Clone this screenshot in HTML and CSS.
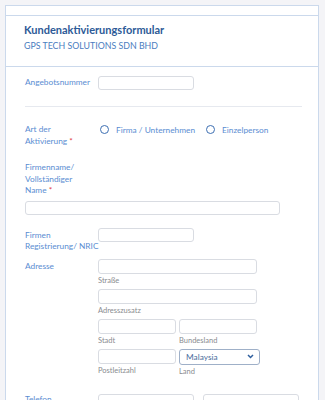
FILE: index.html
```html
<!DOCTYPE html>
<html lang="de">
  <head>
    <meta charset="UTF-8" />
    <meta name="viewport" content="width=device-width, initial-scale=1.0" />
    <title>Kundenaktivierungsformular</title>
    <link rel="stylesheet" href="styles.css">
  </head>
  <body>
    <div class="card">
      <div class="top-strip"></div>

      <div class="header">
        <h1 class="title">Kundenaktivierungsformular</h1>
        <p class="subtitle">GPS TECH SOLUTIONS SDN BHD</p>
      </div>

      <div class="form">
        <div class="row row-offer">
          <label class="label" for="offer">Angebotsnummer</label>
          <input class="input short" type="text" id="offer" />
        </div>

        <div class="divider"></div>

        <div class="row row-type">
          <span class="label">Art der Aktivierung <span class="req">*</span></span>
          <div class="radios">
            <label class="radio"><span class="circle"></span>Firma / Unternehmen</label>
            <label class="radio"><span class="circle"></span>Einzelperson</label>
          </div>
        </div>

        <div class="row-stack">
          <label class="label narrow" for="company">Firmenname/ Vollständiger Name <span class="req">*</span></label>
          <input class="input wide" type="text" id="company" />
        </div>

        <div class="row row-reg">
          <label class="label" for="reg">Firmen<br>Registrierung/ NRIC</label>
          <input class="input short" type="text" id="reg" />
        </div>

        <div class="row row-address">
          <span class="label">Adresse</span>
          <div class="address">
            <div class="field full">
              <input class="input" type="text" />
              <span class="sub">Straße</span>
            </div>
            <div class="field full">
              <input class="input" type="text" />
              <span class="sub">Adresszusatz</span>
            </div>
            <div class="field">
              <input class="input" type="text" />
              <span class="sub">Stadt</span>
            </div>
            <div class="field">
              <input class="input" type="text" />
              <span class="sub">Bundesland</span>
            </div>
            <div class="field">
              <input class="input" type="text" />
              <span class="sub">Postleitzahl</span>
            </div>
            <div class="field">
              <div class="select">
                <span>Malaysia</span>
                <svg width="7" height="5" viewBox="0 0 7 5"><path d="M1 1 L3.5 3.5 L6 1" fill="none" stroke="#2f5f9e" stroke-width="1.5"/></svg>
              </div>
              <span class="sub land">Land</span>
            </div>
          </div>
        </div>

        <div class="row row-phone">
          <span class="label">Telefon</span>
          <div class="phone">
            <input class="input short" type="text" />
            <input class="input short" type="text" />
          </div>
        </div>
      </div>
    </div>
  </body>
</html>
```

FILE: styles.css
```css
body {
  margin: 0;
  background-color: #f4f4f7;
  font-family: Lato, "Noto Sans", sans-serif;
  overflow: hidden;
}

.card {
  margin: 5px 6px 0 5px;
  background-color: #fff;
  border: 1px solid #cbd9ec;
  border-bottom: none;
  height: 420px;
}

.top-strip {
  height: 9px;
  border-bottom: 1px solid #cbd9ec;
}

.header {
  padding: 7px 18px 0;
  height: 43px;
  border-bottom: 1px solid #cbd9ec;
}

.title {
  margin: 0;
  font-size: 11px;
  line-height: 14px;
  font-weight: bold;
  color: #2d5a97;
}

.subtitle {
  margin: 3px 0 0;
  font-size: 8.8px;
  color: #4b7dc0;
}

.form {
  padding: 8px 18px 0 19px;
}

.row {
  display: grid;
  grid-template-columns: 73px 1fr;
}

.label {
  font-size: 8.3px;
  line-height: 11.5px;
  color: #5a8dd2;
}

.req {
  color: #e2454a;
}

.input {
  display: block;
  box-sizing: border-box;
  height: 14px;
  border: 1px solid #d9dce2;
  border-radius: 3px;
  background: #fff;
  padding: 0;
  margin: 0;
}

.short {
  width: 96px;
}

.row-offer {
  align-items: center;
  height: 15px;
}

.divider {
  margin: 16px 0 0 0;
  height: 1px;
  background-color: #e6e9ef;
  width: 277px;
}

.row-type {
  margin-top: 17px;
}

.row-type .label {
  padding-right: 14px;
}

.radios {
  display: flex;
  gap: 9px;
}

.radio {
  display: flex;
  align-items: center;
  font-size: 8.3px;
  color: #5a8dd2;
  height: 11px;
}

.circle {
  width: 7px;
  height: 7px;
  border: 1.6px solid #3d6fb2;
  border-radius: 50%;
  margin: 0 7px 0 2px;
}

.row-stack {
  margin-top: 15px;
}

.narrow {
  display: block;
  width: 60px;
}

.wide {
  width: 255px;
  margin-top: 4px;
  height: 14px;
}

.row-reg {
  margin-top: 13px;
}

.row-reg .label {
  white-space: nowrap;
  padding-top: 2px;
}

.row-address {
  margin-top: 6px;
}

.row-address .label {
  padding-top: 2px;
}

.address {
  display: grid;
  grid-template-columns: 78px 78px;
  column-gap: 3px;
  row-gap: 4px;
  width: 159px;
}

.field .input {
  width: 100%;
  height: 15px;
}

.full {
  grid-column: 1 / 3;
}

.sub {
  display: block;
  font-size: 7.5px;
  color: #8a8c90;
  margin-top: 2px;
  line-height: 9px;
}

.select {
  box-sizing: border-box;
  width: 81px;
  height: 16px;
  border: 1px solid #9fb0c8;
  border-radius: 3px;
  display: flex;
  align-items: center;
  justify-content: space-between;
  padding: 0 5px 0 6px;
  font-size: 8.3px;
  color: #4a6c9c;
}

.land {
  margin-top: 2px;
}

.row-phone {
  margin-top: 18px;
}

.phone {
  display: flex;
  gap: 9px;
}
```
